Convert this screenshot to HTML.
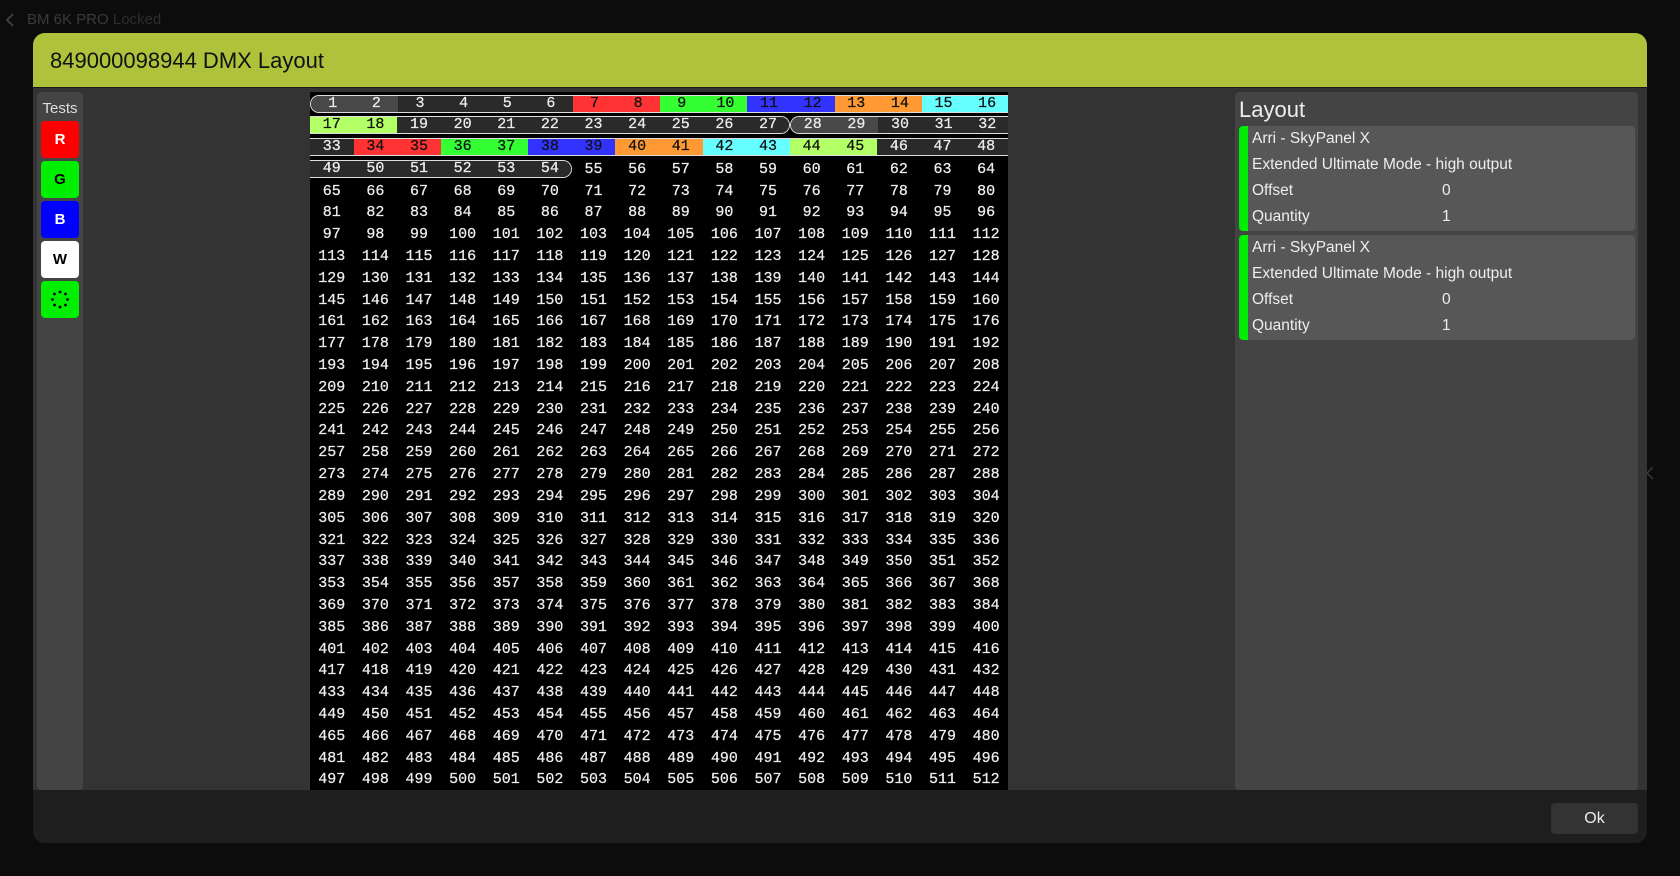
<!DOCTYPE html>
<html><head><meta charset="utf-8"><style>
*{margin:0;padding:0;box-sizing:border-box}
body{width:1680px;height:876px;background:#0c0c0c;font-family:"Liberation Sans",sans-serif;position:relative;overflow:hidden}
.top{position:absolute;left:27px;top:11px;font-size:15px;color:#3a3a3a}
.top b{font-weight:normal;color:#2e2e2e}
.dlg{position:absolute;left:33px;top:33px;width:1614px;height:810px;background:#333;border-radius:12px;overflow:hidden}
.hdr{position:absolute;left:0;top:0;width:100%;height:55px;background:#afc23b;border-bottom:1px solid #1a1a1a}
.hdr span{position:absolute;left:17px;top:15px;font-size:22px;color:#111}
.foot{position:absolute;left:0;top:757px;width:100%;height:53px;background:#1e1e1e}
.ok{position:absolute;left:1518px;top:13px;width:87px;height:31px;background:#333;border-radius:4px;color:#eee;font-size:16px;text-align:center;line-height:31px}
.tests{position:absolute;left:4px;top:59px;width:46px;height:698px;background:#444;border-radius:4px}
.tests .t{position:absolute;left:0;width:46px;top:8px;text-align:center;color:#ddd;font-size:15px}
.btn{position:absolute;left:4px;width:38px;height:37px;border-radius:4px;text-align:center;line-height:37px;font-weight:bold;font-size:15px}
.grid{position:absolute;left:277px;top:59px;width:698px;height:698px;background:#000;font-family:"Liberation Mono",monospace;font-size:15px;color:#eee;-webkit-text-stroke:0.25px #eee}
.plain{position:absolute;left:0;top:88.5px;width:698px;display:grid;grid-template-columns:repeat(16,43.625px);grid-auto-rows:21.8125px}
.plain i{font-style:normal;text-align:center;line-height:21.8125px}
.seg{position:absolute;height:18px;border:1.5px solid #ddd;display:flex;overflow:hidden}
.seg i{font-style:normal;width:43.625px;flex:none;text-align:center;line-height:16px;background:#2a2a2a}
.L{background:#484848!important}
.r{background:#ff3333!important;color:#111;-webkit-text-stroke:0.25px #111}.g{background:#33ff33!important;color:#111;-webkit-text-stroke:0.25px #111}.b{background:#3333ff!important;color:#111;-webkit-text-stroke:0.25px #111}
.o{background:#ff9933!important;color:#111;-webkit-text-stroke:0.25px #111}.c{background:#66ffff!important;color:#111;-webkit-text-stroke:0.25px #111}.y{background:#b3ff66!important;color:#111;-webkit-text-stroke:0.25px #111}
.panel{position:absolute;left:1202px;top:59px;width:403px;height:698px;background:#444;border-radius:4px}
.panel h2{position:absolute;left:4px;top:5px;font-weight:normal;font-size:22px;color:#eee}
.card{position:absolute;left:4px;height:105px;background:#575757;border-radius:4px;overflow:hidden;width:396px}
.card:before{content:"";position:absolute;left:0;top:0;width:9px;height:100%;background:#00ee00}
.card div{position:absolute;left:13px;font-size:15.5px;color:#eee}
.card div span{position:absolute;left:190px}
</style></head><body>
<div class="top"><svg style="position:absolute;left:-22px;top:1px" width="10" height="16" viewBox="0 0 10 16"><path d="M8 2 L2 8 L8 14" fill="none" stroke="#3a3a3a" stroke-width="2.2"/></svg>BM 6K PRO <b>Locked</b></div>
<svg style="position:absolute;left:1646px;top:466px" width="8" height="14" viewBox="0 0 8 14"><path d="M7 1 L1 7 L7 13" fill="none" stroke="#3a3a3a" stroke-width="1.5"/></svg>
<div class="dlg">
<div class="hdr"><span>849000098944 DMX Layout</span></div>
<div class="tests"><div class="t">Tests</div>
<div class="btn" style="top:29px;background:#ff0000;color:#fff">R</div>
<div class="btn" style="top:69px;background:#00ee00;color:#000">G</div>
<div class="btn" style="top:109px;background:#0000ff;color:#fff">B</div>
<div class="btn" style="top:149px;background:#fff;color:#000">W</div>
<div class="btn" style="top:189px;background:#00ee00"><svg width="38" height="37" viewBox="0 0 38 37"><g fill="#000"><circle cx="19" cy="11" r="1.4"/><circle cx="24.5" cy="13" r="1.4"/><circle cx="26.5" cy="18.5" r="1.4"/><circle cx="24.5" cy="24" r="1.4"/><circle cx="19" cy="26" r="1.4"/><circle cx="13.5" cy="24" r="1.4"/><circle cx="11.5" cy="18.5" r="1.4"/><circle cx="13.5" cy="13" r="1.4"/></g></svg></div>
</div>
<div class="grid">
<div class="seg" style="left:0;top:2.5px;width:698px;border-right:none;border-radius:9px 0 0 9px"><i class="L">1</i><i class="L">2</i><i>3</i><i>4</i><i>5</i><i>6</i><i class="r">7</i><i class="r">8</i><i class="g">9</i><i class="g">10</i><i class="b">11</i><i class="b">12</i><i class="o">13</i><i class="o">14</i><i class="c">15</i><i class="c">16</i></div>
<div class="seg" style="left:0;top:24.3px;width:480px;border-left:none;border-radius:0 9px 9px 0"><i class="y">17</i><i class="y">18</i><i>19</i><i>20</i><i>21</i><i>22</i><i>23</i><i>24</i><i>25</i><i>26</i><i>27</i></div>
<div class="seg" style="left:480px;top:24.3px;width:218px;border-right:none;border-radius:9px 0 0 9px"><i class="L">28</i><i class="L">29</i><i>30</i><i>31</i><i>32</i></div>
<div class="seg" style="left:0;top:46.1px;width:698px;border-left:none;border-right:none"><i>33</i><i class="r">34</i><i class="r">35</i><i class="g">36</i><i class="g">37</i><i class="b">38</i><i class="b">39</i><i class="o">40</i><i class="o">41</i><i class="c">42</i><i class="c">43</i><i class="y">44</i><i class="y">45</i><i>46</i><i>47</i><i>48</i></div>
<div class="seg" style="left:0;top:67.9px;width:262px;border-left:none;border-radius:0 9px 9px 0"><i>49</i><i>50</i><i>51</i><i>52</i><i>53</i><i>54</i></div>
<div class="plain" style="top:66.7px;left:261.75px;width:436.25px;grid-template-columns:repeat(10,43.625px)"><i>55</i><i>56</i><i>57</i><i>58</i><i>59</i><i>60</i><i>61</i><i>62</i><i>63</i><i>64</i></div>
<div class="plain">
<i>65</i><i>66</i><i>67</i><i>68</i><i>69</i><i>70</i><i>71</i><i>72</i><i>73</i><i>74</i><i>75</i><i>76</i><i>77</i><i>78</i><i>79</i><i>80</i>
<i>81</i><i>82</i><i>83</i><i>84</i><i>85</i><i>86</i><i>87</i><i>88</i><i>89</i><i>90</i><i>91</i><i>92</i><i>93</i><i>94</i><i>95</i><i>96</i>
<i>97</i><i>98</i><i>99</i><i>100</i><i>101</i><i>102</i><i>103</i><i>104</i><i>105</i><i>106</i><i>107</i><i>108</i><i>109</i><i>110</i><i>111</i><i>112</i>
<i>113</i><i>114</i><i>115</i><i>116</i><i>117</i><i>118</i><i>119</i><i>120</i><i>121</i><i>122</i><i>123</i><i>124</i><i>125</i><i>126</i><i>127</i><i>128</i>
<i>129</i><i>130</i><i>131</i><i>132</i><i>133</i><i>134</i><i>135</i><i>136</i><i>137</i><i>138</i><i>139</i><i>140</i><i>141</i><i>142</i><i>143</i><i>144</i>
<i>145</i><i>146</i><i>147</i><i>148</i><i>149</i><i>150</i><i>151</i><i>152</i><i>153</i><i>154</i><i>155</i><i>156</i><i>157</i><i>158</i><i>159</i><i>160</i>
<i>161</i><i>162</i><i>163</i><i>164</i><i>165</i><i>166</i><i>167</i><i>168</i><i>169</i><i>170</i><i>171</i><i>172</i><i>173</i><i>174</i><i>175</i><i>176</i>
<i>177</i><i>178</i><i>179</i><i>180</i><i>181</i><i>182</i><i>183</i><i>184</i><i>185</i><i>186</i><i>187</i><i>188</i><i>189</i><i>190</i><i>191</i><i>192</i>
<i>193</i><i>194</i><i>195</i><i>196</i><i>197</i><i>198</i><i>199</i><i>200</i><i>201</i><i>202</i><i>203</i><i>204</i><i>205</i><i>206</i><i>207</i><i>208</i>
<i>209</i><i>210</i><i>211</i><i>212</i><i>213</i><i>214</i><i>215</i><i>216</i><i>217</i><i>218</i><i>219</i><i>220</i><i>221</i><i>222</i><i>223</i><i>224</i>
<i>225</i><i>226</i><i>227</i><i>228</i><i>229</i><i>230</i><i>231</i><i>232</i><i>233</i><i>234</i><i>235</i><i>236</i><i>237</i><i>238</i><i>239</i><i>240</i>
<i>241</i><i>242</i><i>243</i><i>244</i><i>245</i><i>246</i><i>247</i><i>248</i><i>249</i><i>250</i><i>251</i><i>252</i><i>253</i><i>254</i><i>255</i><i>256</i>
<i>257</i><i>258</i><i>259</i><i>260</i><i>261</i><i>262</i><i>263</i><i>264</i><i>265</i><i>266</i><i>267</i><i>268</i><i>269</i><i>270</i><i>271</i><i>272</i>
<i>273</i><i>274</i><i>275</i><i>276</i><i>277</i><i>278</i><i>279</i><i>280</i><i>281</i><i>282</i><i>283</i><i>284</i><i>285</i><i>286</i><i>287</i><i>288</i>
<i>289</i><i>290</i><i>291</i><i>292</i><i>293</i><i>294</i><i>295</i><i>296</i><i>297</i><i>298</i><i>299</i><i>300</i><i>301</i><i>302</i><i>303</i><i>304</i>
<i>305</i><i>306</i><i>307</i><i>308</i><i>309</i><i>310</i><i>311</i><i>312</i><i>313</i><i>314</i><i>315</i><i>316</i><i>317</i><i>318</i><i>319</i><i>320</i>
<i>321</i><i>322</i><i>323</i><i>324</i><i>325</i><i>326</i><i>327</i><i>328</i><i>329</i><i>330</i><i>331</i><i>332</i><i>333</i><i>334</i><i>335</i><i>336</i>
<i>337</i><i>338</i><i>339</i><i>340</i><i>341</i><i>342</i><i>343</i><i>344</i><i>345</i><i>346</i><i>347</i><i>348</i><i>349</i><i>350</i><i>351</i><i>352</i>
<i>353</i><i>354</i><i>355</i><i>356</i><i>357</i><i>358</i><i>359</i><i>360</i><i>361</i><i>362</i><i>363</i><i>364</i><i>365</i><i>366</i><i>367</i><i>368</i>
<i>369</i><i>370</i><i>371</i><i>372</i><i>373</i><i>374</i><i>375</i><i>376</i><i>377</i><i>378</i><i>379</i><i>380</i><i>381</i><i>382</i><i>383</i><i>384</i>
<i>385</i><i>386</i><i>387</i><i>388</i><i>389</i><i>390</i><i>391</i><i>392</i><i>393</i><i>394</i><i>395</i><i>396</i><i>397</i><i>398</i><i>399</i><i>400</i>
<i>401</i><i>402</i><i>403</i><i>404</i><i>405</i><i>406</i><i>407</i><i>408</i><i>409</i><i>410</i><i>411</i><i>412</i><i>413</i><i>414</i><i>415</i><i>416</i>
<i>417</i><i>418</i><i>419</i><i>420</i><i>421</i><i>422</i><i>423</i><i>424</i><i>425</i><i>426</i><i>427</i><i>428</i><i>429</i><i>430</i><i>431</i><i>432</i>
<i>433</i><i>434</i><i>435</i><i>436</i><i>437</i><i>438</i><i>439</i><i>440</i><i>441</i><i>442</i><i>443</i><i>444</i><i>445</i><i>446</i><i>447</i><i>448</i>
<i>449</i><i>450</i><i>451</i><i>452</i><i>453</i><i>454</i><i>455</i><i>456</i><i>457</i><i>458</i><i>459</i><i>460</i><i>461</i><i>462</i><i>463</i><i>464</i>
<i>465</i><i>466</i><i>467</i><i>468</i><i>469</i><i>470</i><i>471</i><i>472</i><i>473</i><i>474</i><i>475</i><i>476</i><i>477</i><i>478</i><i>479</i><i>480</i>
<i>481</i><i>482</i><i>483</i><i>484</i><i>485</i><i>486</i><i>487</i><i>488</i><i>489</i><i>490</i><i>491</i><i>492</i><i>493</i><i>494</i><i>495</i><i>496</i>
<i>497</i><i>498</i><i>499</i><i>500</i><i>501</i><i>502</i><i>503</i><i>504</i><i>505</i><i>506</i><i>507</i><i>508</i><i>509</i><i>510</i><i>511</i><i>512</i>
</div>
</div>
<div class="panel"><h2>Layout</h2>
<div class="card" style="top:34px"><div style="top:4px">Arri - SkyPanel X</div><div style="top:30px">Extended Ultimate Mode - high output</div><div style="top:56px">Offset<span>0</span></div><div style="top:82px">Quantity<span>1</span></div></div>
<div class="card" style="top:143px"><div style="top:4px">Arri - SkyPanel X</div><div style="top:30px">Extended Ultimate Mode - high output</div><div style="top:56px">Offset<span>0</span></div><div style="top:82px">Quantity<span>1</span></div></div>
</div>
<div class="foot"><div class="ok">Ok</div></div>
</div>
</body></html>
